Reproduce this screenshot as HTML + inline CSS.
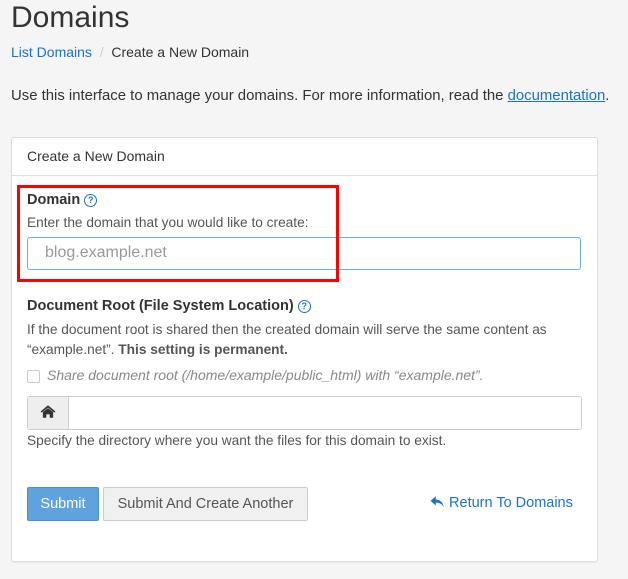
<!DOCTYPE html>
<html><head><style>
body{margin:0;width:628px;height:579px;background:#f5f5f5;font-family:"Liberation Sans",sans-serif;color:#333;position:relative;overflow:hidden}
.a{position:absolute;white-space:nowrap}
.q{display:inline-block;width:11px;height:11px;border:1.3px solid #1a73c9;border-radius:50%;color:#1a73c9;font-size:9px;line-height:11px;text-align:center;font-weight:bold;vertical-align:1px}
</style></head><body>
<div class="a" style="left:11px;top:0;font-size:30px;color:#333;line-height:36px">Domains</div>
<div class="a" style="left:11px;top:44px;font-size:14px"><span style="color:#1a73c9">List Domains</span> <span style="color:#ccc">&nbsp;/&nbsp;</span> Create a New Domain</div>
<div class="a" style="left:11px;top:88px;font-size:14.9px">Use this interface to manage your domains. For more information, read the <span style="color:#1a73c9;text-decoration:underline">documentation</span>.</div>
<div class="a" style="left:11px;top:137px;width:585px;height:423px;background:#fff;border:1px solid #ddd;border-radius:3px;box-shadow:0 1px 1px rgba(0,0,0,.05)"></div>
<div class="a" style="left:12px;top:175px;width:585px;height:1px;background:#ddd"></div>
<div class="a" style="left:27px;top:148px;font-size:14px">Create a New Domain</div>
<div class="a" style="left:27px;top:192px;font-size:14.5px;font-weight:bold">Domain <span class="q">?</span></div>
<div class="a" style="left:27px;top:215px;font-size:13.7px;color:#555">Enter the domain that you would like to create:</div>
<div class="a" style="left:27px;top:237px;width:552px;height:31px;border:1px solid #66afe9;border-radius:3px;background:#fff"></div>
<div class="a" style="left:45px;top:244px;font-size:16px;color:#999">blog.example.net</div>
<div class="a" style="left:17px;top:185px;width:316px;height:91px;border:3px solid #f00"></div>
<div class="a" style="left:27px;top:298px;font-size:14.5px;font-weight:bold">Document Root (File System Location) <span class="q">?</span></div>
<div class="a" style="left:27px;top:320px;font-size:13.7px;color:#555;line-height:20px">If the document root is shared then the created domain will serve the same content as<br>“example.net”. <b>This setting is permanent.</b></div>
<div class="a" style="left:27px;top:370px;width:11px;height:11px;border:1px solid #ccc;border-radius:2px;background:#fff"></div>
<div class="a" style="left:47px;top:367px;font-size:14px;color:#888;font-style:italic">Share document root (/home/example/public_html) with “example.net”.</div>
<div class="a" style="left:27px;top:396px;width:553px;height:32px;border:1px solid #ccc;border-radius:3px;background:#fff"></div>
<div class="a" style="left:28px;top:397px;width:40px;height:32px;background:#eee;border-right:1px solid #ccc"></div>
<svg class="a" style="left:40px;top:404px" width="16" height="15" viewBox="0 0 14 13"><path d="M7 1 L0.5 6.5 L1.5 7.5 L7 3 L12.5 7.5 L13.5 6.5 Z M2.5 7 L7 3.5 L11.5 7 V12 H8.5 V9 H5.5 V12 H2.5 Z" fill="#333"/></svg>
<div class="a" style="left:27px;top:433px;font-size:13.7px;color:#555">Specify the directory where you want the files for this domain to exist.</div>
<div class="a" style="left:27px;top:487px;width:70px;height:32px;background:#5fa2dd;border:1px solid #4a90d0;border-radius:2px;color:#fff;font-size:14.5px;line-height:32px;text-align:center">Submit</div>
<div class="a" style="left:103px;top:487px;width:203px;height:32px;background:#f0f0f0;border:1px solid #ccc;border-radius:2px;color:#555;font-size:14.5px;line-height:32px;text-align:center">Submit And Create Another</div>
<div class="a" style="left:430px;top:495px;font-size:14.5px;color:#1a73c9"><svg width="15" height="14" viewBox="0 0 13 12" style="vertical-align:-2px"><path d="M5 1 L0.5 5 L5 9 V6.5 C8.5 6.5 10.5 7.5 12 11 C11.5 6.5 9 4 5 3.8 Z" fill="#1a73c9"/></svg> Return To Domains</div>
</body></html>
